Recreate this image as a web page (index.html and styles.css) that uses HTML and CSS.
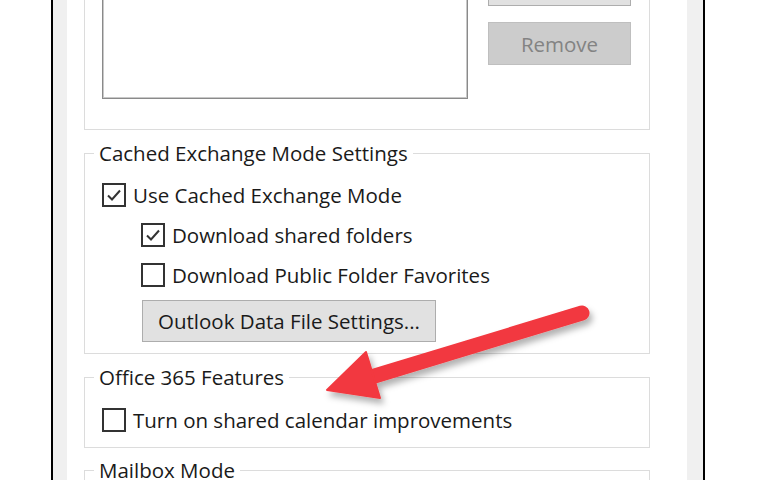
FILE: index.html
```html
<!DOCTYPE html>
<html lang="en">
<head>
<meta charset="utf-8">
<title>Account Settings</title>
<link rel="stylesheet" href="styles.css">
</head>
<body>
<div class="frame">
  <div class="panel">
    <fieldset class="group group-top">
      <div class="top-row">
        <div class="listbox"></div>
        <div class="btn-col">
          <div class="btn"></div>
          <div class="btn btn-disabled">Remove</div>
        </div>
      </div>
    </fieldset>

    <fieldset class="group">
      <legend class="legend">Cached Exchange Mode Settings</legend>
      <div class="group-body body-cached">
        <div class="check-row">
          <span class="box"><svg class="tick" viewBox="0 0 20 20"><polyline points="4,10.5 8,14.5 16,5.5"/></svg></span>
          <span class="label">Use Cached Exchange Mode</span>
        </div>
        <div class="check-row sub">
          <span class="box"><svg class="tick" viewBox="0 0 20 20"><polyline points="4,10.5 8,14.5 16,5.5"/></svg></span>
          <span class="label">Download shared folders</span>
        </div>
        <div class="check-row sub">
          <span class="box"></span>
          <span class="label">Download Public Folder Favorites</span>
        </div>
        <div class="btn-row">
          <div class="btn btn-wide">Outlook Data File Settings...</div>
        </div>
      </div>
    </fieldset>

    <fieldset class="group">
      <legend class="legend">Office 365 Features</legend>
      <div class="group-body body-office">
        <div class="check-row">
          <span class="box"></span>
          <span class="label">Turn on shared calendar improvements</span>
        </div>
      </div>
    </fieldset>

    <fieldset class="group group-last">
      <legend class="legend legend-last">Mailbox Mode</legend>
      <div class="group-body body-mailbox"></div>
    </fieldset>
  </div>
</div>

<svg class="arrow" viewBox="0 0 761 480" width="761" height="480">
  <defs>
    <filter id="shadow" x="-20%" y="-50%" width="140%" height="200%">
      <feDropShadow dx="3" dy="5" stdDeviation="3" flood-color="#000" flood-opacity="0.3"/>
    </filter>
  </defs>
  <g filter="url(#shadow)" fill="#f2393f" stroke="#f2393f">
    <line x1="582" y1="313" x2="368" y2="378" stroke-width="15" stroke-linecap="round"/>
    <polygon points="327,390 366,352 380,398" stroke-width="2" stroke-linejoin="round"/>
  </g>
</svg>
</body>
</html>
```

FILE: styles.css
```css
html, body {
  margin: 0;
  padding: 0;
  background: #ffffff;
  width: 761px;
  height: 480px;
  overflow: hidden;
}

body {
  position: relative;
  font-family: "Open Sans", "Noto Sans", "Liberation Sans", sans-serif;
  font-size: 20.5px;
  color: #1a1a1a;
}

.frame {
  margin-left: 51px;
  width: 654px;
  height: 480px;
  border-left: 2px solid #000;
  border-right: 2px solid #000;
  background: #f0f0f0;
  padding: 0 16px 0 14px;
  box-sizing: border-box;
  overflow: hidden;
}

.panel {
  display: flow-root;
  background: #ffffff;
  height: 480px;
  padding: 0 37px 0 17px;
}

.group {
  margin: 12px 0 0 0;
  padding: 0;
  border: 1px solid #dcdcdc;
  min-width: 0;
}

.group-top {
  margin-top: -40px;
  padding: 0 0 30px 17px;
}

.group-last {
  margin-top: 13px;
}

.legend {
  margin-left: 9px;
  padding: 0 5px;
  line-height: 22px;
  white-space: nowrap;
}

.legend-last {
  line-height: 18px;
}

.top-row {
  display: flex;
}

.listbox {
  width: 366px;
  height: 138px;
  box-sizing: border-box;
  border: 1px solid #8a8a8a;
  box-shadow: inset 0 0 0 1px #c8c8c8;
  background: #fff;
}

.btn-col {
  display: flex;
  flex-direction: column;
  gap: 16px;
  margin-left: 20px;
  padding-top: 2px;
}

.btn {
  box-sizing: border-box;
  width: 143px;
  height: 43px;
  display: flex;
  align-items: center;
  justify-content: center;
  background: #e1e1e1;
  border: 1px solid #adadad;
  white-space: nowrap;
}

.btn-disabled {
  background: #cccccc;
  border-color: #bfbfbf;
  color: #838383;
}

.group-body {
  padding-left: 17px;
}

.body-cached {
  padding-top: 11px;
  padding-bottom: 11px;
}

.body-office {
  padding-top: 12px;
  padding-bottom: 7px;
}

.body-mailbox {
  height: 60px;
}

.check-row {
  height: 40px;
  display: flex;
  align-items: center;
}

.check-row.sub {
  padding-left: 39px;
}

.box {
  box-sizing: border-box;
  width: 24px;
  height: 24px;
  border: 2px solid #333333;
  background: #fff;
  margin-right: 7px;
  flex: none;
  display: flex;
}

.tick {
  width: 20px;
  height: 20px;
  fill: none;
  stroke: #333333;
  stroke-width: 2;
}

.label {
  white-space: nowrap;
}

.btn-row {
  padding-left: 40px;
  margin-top: 5px;
}

.btn-wide {
  width: 294px;
  height: 42px;
}

.arrow {
  position: absolute;
  left: 0;
  top: 0;
  pointer-events: none;
}
```
